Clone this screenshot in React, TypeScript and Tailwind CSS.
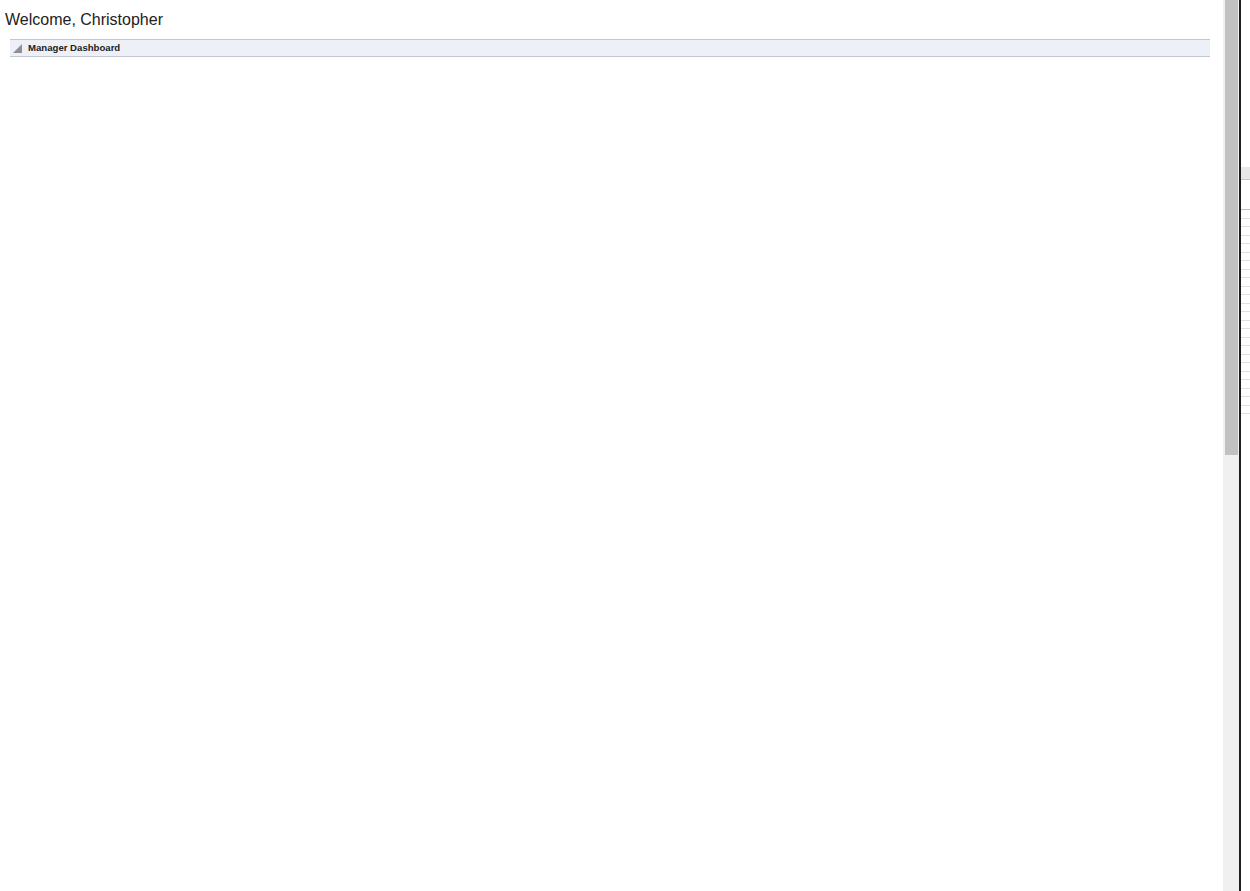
const stripRows = Array.from({ length: 24 }, (_, i) => i);

function PanelHeader({ title }: { title: string }) {
  return (
    <div className="ml-[10px] mr-[13px] mt-[9px] flex h-[18px] items-center border-y border-[#c3c7cf] bg-[#edf0f7]">
      <svg width="10" height="9" viewBox="0 0 10 9" className="ml-[3px] mr-[5px]">
        <polygon points="9,0 9,9 0,9" fill="#8d9095" />
      </svg>
      <span className="text-[9.6px] font-bold text-[#222] [font-family:'Liberation_Sans',Arial,sans-serif]">
        {title}
      </span>
    </div>
  );
}

export default function App() {
  return (
    <div className="flex h-screen w-[1250px] overflow-hidden bg-white [font-family:'Liberation_Sans',Arial,sans-serif]">
      <div className="w-[1223px] shrink-0">
        <h1 className="pl-[5px] pt-[10px] text-[16px] leading-[20px] text-[#222]">
          Welcome, Christopher
        </h1>
        <PanelHeader title="Manager Dashboard" />
      </div>

      {/* page scrollbar */}
      <div className="flex w-[16px] shrink-0 justify-center bg-[#f0f0f0]">
        <div className="h-[455px] w-[13px] bg-[#c1c1c1]" />
      </div>

      {/* window edge */}
      <div className="w-[2px] shrink-0 bg-[#1e1e1e]" />

      {/* window behind, peeking out */}
      <div className="flex w-[9px] shrink-0 flex-col pt-[167px]">
        <div className="h-[13px] border-b border-[#c8c8c8] bg-[#e8e8e8]" />
        <div className="mt-[29px] border-t border-[#bdbdbd]" />
        {stripRows.map((i) => (
          <div key={i} className="h-[8.5px] border-b border-[#e0e0e0]" />
        ))}
      </div>
    </div>
  );
}
